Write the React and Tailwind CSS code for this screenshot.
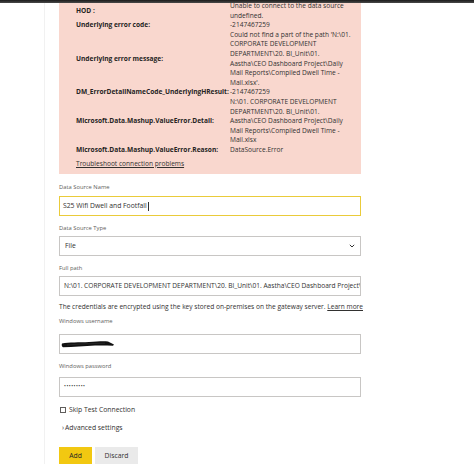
const errorRows = [
  { label: 'HOD :', lines: ['Unable to connect to the data source', 'undefined.'] },
  { label: 'Underlying error code:', lines: ['-2147467259'] },
  {
    label: 'Underlying error message:',
    lines: [
      "Could not find a part of the path 'N:\\01.",
      'CORPORATE DEVELOPMENT',
      'DEPARTMENT\\20. BI_Unit\\01.',
      'Aastha\\CEO Dashboard Project\\Daily',
      'Mail Reports\\Compiled Dwell Time -',
      "Mail.xlsx'.",
    ],
  },
  { label: 'DM_ErrorDetailNameCode_UnderlyingHResult:', lines: ['-2147467259'] },
  {
    label: 'Microsoft.Data.Mashup.ValueError.Detail:',
    lines: [
      'N:\\01. CORPORATE DEVELOPMENT',
      'DEPARTMENT\\20. BI_Unit\\01.',
      'Aastha\\CEO Dashboard Project\\Daily',
      'Mail Reports\\Compiled Dwell Time -',
      'Mail.xlsx',
    ],
  },
  { label: 'Microsoft.Data.Mashup.ValueError.Reason:', lines: ['DataSource.Error'] },
];

function FieldLabel({ children, className = '' }) {
  return <div className={`text-[5.8px] leading-[8px] text-[#605e5c] ${className}`}>{children}</div>;
}

function ErrorBox() {
  return (
    <div className="bg-[#f9d7ce] pl-[17px] pr-[6px] pt-[1px] pb-[6px] text-[6.6px] leading-[9.6px] text-[#323130]">
      <div className="grid grid-cols-[154px_1fr] items-center">
        {errorRows.map(row => (
          <div className="contents" key={row.label}>
            <div className="font-bold text-[#252423] whitespace-nowrap">{row.label}</div>
            <div>
              {row.lines.map((line, i) => (
                <div className="whitespace-nowrap" key={i}>
                  {line}
                </div>
              ))}
            </div>
          </div>
        ))}
      </div>
      <div className="mt-[4px] underline text-[#323130]">Troubleshoot connection problems</div>
    </div>
  );
}

function Redacted() {
  return (
    <svg width="54" height="10" viewBox="0 0 54 10" className="block">
      <path
        d="M1 4.5 C8 3, 18 3.5, 28 3 C36 2.5, 42 2, 47 2.5 L50 4 L53 5.5 L52 6.8 C46 6.5, 40 6.3, 34 6.6 C24 7, 12 8.2, 2 8.2 C0.5 7.5, 0.5 5.5, 1 4.5 Z"
        fill="#111"
      />
      <path d="M6 6 C18 5, 30 4.5, 44 4.2" stroke="#333" strokeWidth="0.6" fill="none" />
    </svg>
  );
}

export default function App() {
  return (
    <div className="relative w-[474px] h-[464px] overflow-hidden bg-white" style={{ fontFamily: '"Open Sans", "Noto Sans", sans-serif' }}>
      <div className="absolute top-0 left-0 right-0 h-[3px] bg-gradient-to-b from-[#1b1b1b] to-[#4a4a4a]" />
      <div className="ml-[44px] h-full border-l border-[#f1f1f1] pl-[14px]">
        <div className="w-[302px]">
          <ErrorBox />

          <FieldLabel className="mt-[9px]">Data Source Name</FieldLabel>
          <div className="mt-[5px] h-[20px] border border-[#eacb3a] flex items-center px-[3px] text-[6.8px] text-[#323130]">
            S25 Wifi Dwell and Footfall
            <span className="inline-block w-[1px] h-[9px] bg-[#333] ml-[1px]" />
          </div>

          <FieldLabel className="mt-[8px]">Data Source Type</FieldLabel>
          <div className="mt-[4px] h-[20px] border border-[#c8c6c4] flex items-center justify-between px-[5px] text-[6.8px] text-[#323130]">
            <span>File</span>
            <svg width="6" height="4" viewBox="0 0 6 4">
              <path d="M0.8 0.8 L3 3 L5.2 0.8" stroke="#333" strokeWidth="1" fill="none" />
            </svg>
          </div>

          <FieldLabel className="mt-[8px]">Full path</FieldLabel>
          <div className="mt-[4px] h-[20px] border border-[#c8c6c4] flex items-center px-[4px] text-[6.6px] text-[#323130] overflow-hidden whitespace-nowrap">
            N:\01. CORPORATE DEVELOPMENT DEPARTMENT\20. BI_Unit\01. Aastha\CEO Dashboard Project\Daily Mail Reports
          </div>

          <div className="mt-[6px] text-[6.6px] leading-[10px] text-[#323130] whitespace-nowrap">
            The credentials are encrypted using the key stored on-premises on the gateway server.{' '}
            <span className="underline">Learn more</span>
          </div>

          <FieldLabel className="mt-[5px]">Windows username</FieldLabel>
          <div className="mt-[9px] h-[20px] border border-[#c8c6c4] flex items-center px-[1px]">
            <Redacted />
          </div>

          <FieldLabel className="mt-[8px]">Windows password</FieldLabel>
          <div className="mt-[7px] h-[20px] border border-[#c8c6c4] flex items-center px-[4px] text-[5px] tracking-[0.5px] text-[#323130]">
            •••••••••
          </div>

          <div className="mt-[8px] flex items-center gap-[3px] text-[6.8px] leading-[10px] text-[#323130]">
            <span className="inline-block w-[6px] h-[6px] border border-[#605e5c] ml-[1px]" />
            <span>Skip Test Connection</span>
          </div>

          <div className="mt-[8px] pl-[3px] text-[6.8px] leading-[10px] text-[#323130]">
            <span className="mr-[1px]">›</span>Advanced settings
          </div>

          <div className="mt-[14px] flex gap-[3px]">
            <div className="w-[33px] h-[18px] bg-[#f2c811] flex items-center justify-center text-[6.8px] text-[#252423]">Add</div>
            <div className="w-[43px] h-[18px] bg-[#eaeaea] flex items-center justify-center text-[6.8px] text-[#323130]">Discard</div>
          </div>
        </div>
      </div>
    </div>
  );
}
